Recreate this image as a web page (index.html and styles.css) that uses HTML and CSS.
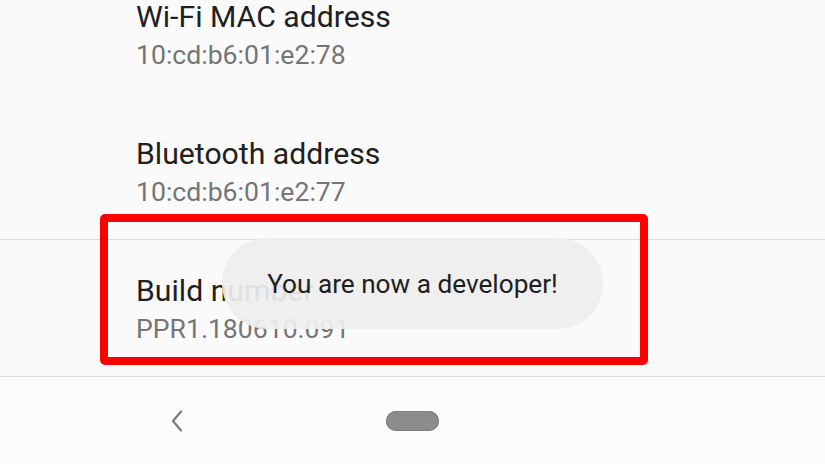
FILE: index.html
```html
<!DOCTYPE html>
<html>
<head>
<meta charset="utf-8">
<link rel="stylesheet" href="styles.css">
</head>
<body>
<div class="screen">
  <div class="list">
    <div class="item">
      <div class="title">Wi-Fi MAC address</div>
      <div class="summary">10:cd:b6:01:e2:78</div>
    </div>
    <div class="item">
      <div class="title">Bluetooth address</div>
      <div class="summary">10:cd:b6:01:e2:77</div>
    </div>
    <div class="divider"></div>
    <div class="item item-last">
      <div class="title">Build number</div>
      <div class="summary">PPR1.180610.091</div>
    </div>
    <div class="divider"></div>
  </div>
  <div class="navbar">
    <div class="nav-back">
      <svg width="14" height="22" viewBox="0 0 14 22"><path d="M11 1.5 L3 11 L11 20.5" fill="none" stroke="#7a7a7a" stroke-width="2.2" stroke-linecap="round" stroke-linejoin="round"/></svg>
    </div>
    <div class="nav-home"></div>
  </div>
  <div class="toast">You are now a developer!</div>
  <div class="highlight"></div>
</div>
</body>
</html>
```
FILE: styles.css
```css
html, body {
  margin: 0;
  padding: 0;
  background: #fafafa;
}
.screen {
  position: relative;
  width: 825px;
  height: 464px;
  overflow: hidden;
  font-family: Roboto, "Liberation Sans", sans-serif;
  background: #fafafa;
}
.list {
  margin-top: -35px;
}
.item {
  height: 137px;
  box-sizing: border-box;
  padding: 34px 0 0 136px;
}
.item-last {
  height: 136px;
  padding-top: 33px;
}
.title {
  font-size: 30.2px;
  line-height: 36px;
  color: #202020;
}
.summary {
  font-size: 26.6px;
  line-height: 40px;
  color: #757575;
}
.divider {
  height: 1px;
  background: #d9d9d9;
}
.navbar {
  height: 87px;
  display: flex;
  align-items: center;
  padding-left: 160px;
  background: #fbfbfb;
}
.nav-back {
  width: 34px;
  height: 22px;
  display: flex;
  justify-content: center;
  align-items: center;
}
.nav-home {
  margin-left: 192px;
  width: 53px;
  height: 20px;
  border-radius: 10px;
  background: #8c8c8c;
  box-shadow: inset 0 0 0 1px #7e7e7e;
}
.toast {
  position: absolute;
  left: 222px;
  top: 238px;
  width: 381px;
  height: 91px;
  border-radius: 46px;
  background: rgba(238, 238, 238, 0.93);
  color: #1e1e1e;
  font-size: 26.2px;
  display: flex;
  align-items: center;
  justify-content: center;
  padding-bottom: 0;
  box-sizing: border-box;
}
.highlight {
  position: absolute;
  left: 100px;
  top: 214px;
  width: 548px;
  height: 151px;
  box-sizing: border-box;
  border: 8px solid #fe0000;
  border-radius: 5px;
}
```
